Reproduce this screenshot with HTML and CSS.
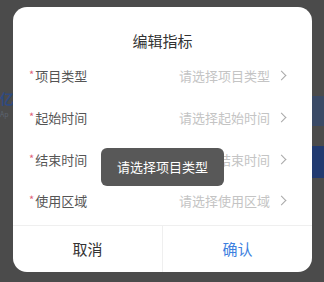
FILE: index.html
```html
<!DOCTYPE html>
<html lang="zh">
<head>
    <meta charset="UTF-8">
    <meta name="viewport" content="width=device-width, initial-scale=1.0">
    <title>编辑指标</title>
    <link rel="stylesheet" href="styles.css">
</head>
<body>

<div class="page-behind">
    <span class="behind-mark mark-a">亿</span>
    <span class="behind-mark mark-b">Ap</span>
    <span class="behind-block block-a"></span>
    <span class="behind-block block-b"></span>
</div>

<div class="dialog">
    <h2 class="dialog-title">编辑指标</h2>
    <div class="field-list">
        <div class="field-row">
            <span class="field-label"><i>*</i>项目类型</span>
            <span class="field-value">请选择项目类型<b class="arrow"></b></span>
        </div>
        <div class="field-row">
            <span class="field-label"><i>*</i>起始时间</span>
            <span class="field-value">请选择起始时间<b class="arrow"></b></span>
        </div>
        <div class="field-row">
            <span class="field-label"><i>*</i>结束时间</span>
            <span class="field-value">请选择结束时间<b class="arrow"></b></span>
        </div>
        <div class="field-row">
            <span class="field-label"><i>*</i>使用区域</span>
            <span class="field-value">请选择使用区域<b class="arrow"></b></span>
        </div>
    </div>
    <div class="dialog-footer">
        <button type="button" class="btn-cancel">取消</button>
        <button type="button" class="btn-ok">确认</button>
    </div>
    <div class="toast">请选择项目类型</div>
</div>

</body>
</html>
```

FILE: styles.css
```css
body {
    margin: 0;
    height: 282px;
    overflow: hidden;
    background-color: #4b4b4b;
    font-family: "Noto Sans CJK SC", "Noto Sans", sans-serif;
    position: relative;
}
.page-behind {
    position: absolute;
    inset: 0;
}
.behind-mark {
    position: absolute;
    color: #2f4a80;
    font-weight: bold;
    font-size: 14px;
    line-height: 14px;
}
.mark-a {
    left: 0;
    top: 91px;
}
.mark-b {
    left: 0;
    top: 111px;
    font-size: 7px;
    line-height: 7px;
    font-weight: normal;
    color: #5d6470;
}
.behind-block {
    position: absolute;
    right: 0;
    width: 12px;
}
.block-a {
    top: 96px;
    height: 30px;
    background-color: #3a4a66;
}
.block-b {
    top: 146px;
    height: 32px;
    background-color: #213a70;
}
.dialog {
    position: relative;
    width: 299px;
    height: 265px;
    margin: 7px 0 0 13px;
    background-color: white;
    border-radius: 14px;
    display: flex;
    flex-direction: column;
}
.dialog-title {
    margin: 0;
    padding: 24px 0 4px;
    line-height: 20px;
    font-size: 15px;
    font-weight: normal;
    text-align: center;
    color: #333;
}
.field-list {
    padding-bottom: 3px;
}
.field-row {
    height: 41.7px;
    display: flex;
    align-items: center;
    justify-content: space-between;
    padding: 0 27px 0 16px;
    font-size: 13px;
}
.field-label {
    color: #555;
}
.field-label i {
    font-style: normal;
    color: #e0627a;
    font-size: 11px;
    margin-right: 1px;
    vertical-align: 2px;
}
.field-value {
    display: flex;
    align-items: center;
    color: #c4c4c4;
}
.arrow {
    width: 6px;
    height: 6px;
    border-top: 1.5px solid #a8a8a8;
    border-right: 1.5px solid #a8a8a8;
    transform: rotate(45deg);
    margin-left: 8px;
}
.dialog-footer {
    flex: 1;
    display: flex;
    border-top: 1px solid #efefef;
}
.dialog-footer button {
    flex: 1;
    border: none;
    background: none;
    font-family: inherit;
    font-size: 15px;
    padding: 0;
    cursor: pointer;
}
.btn-cancel {
    color: #333;
    border-right: 1px solid #efefef !important;
}
.btn-ok {
    color: #3d7fe0;
}
.toast {
    position: absolute;
    left: 88px;
    top: 141px;
    width: 123px;
    height: 38px;
    line-height: 38px;
    text-align: center;
    background-color: #585858;
    color: white;
    font-size: 13px;
    border-radius: 6px;
}
```
